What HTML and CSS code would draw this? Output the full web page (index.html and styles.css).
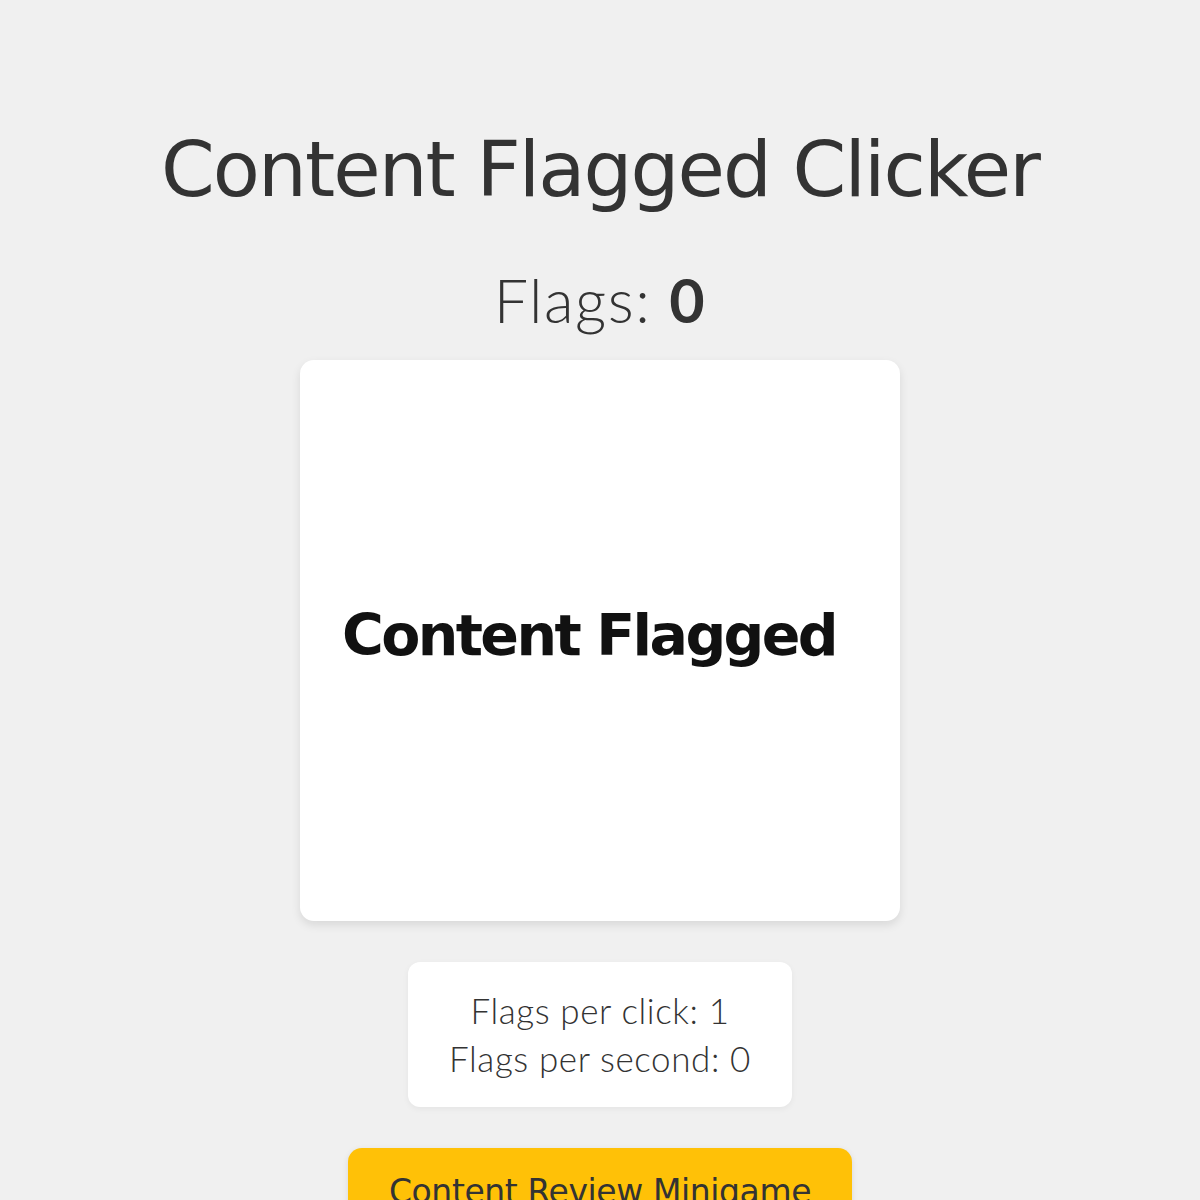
FILE: index.html
```html
<!DOCTYPE html>
<html lang="en">
<head>
    <meta charset="UTF-8">
    <meta name="viewport" content="width=device-width, initial-scale=1.0">
    <title>Content Flagged Clicker</title>
    <link rel="stylesheet" href="styles.css">
</head>
<body>
    <div class="container">
        <h1 class="title">Content Flagged Clicker</h1>
        <div class="score">Flags: <span id="flag-count" class="count">0</span></div>
        <div class="flag-card" id="flag-button">
            <span class="flag-label">Content Flagged</span>
        </div>
        <div class="stats">
            <div>Flags per click: <span id="per-click">1</span></div>
            <div>Flags per second: <span id="per-second">0</span></div>
        </div>
        <button class="minigame-btn">Content Review Minigame</button>
    </div>
</body>
</html>
```

FILE: styles.css
```css
body, html {
    margin: 0;
    padding: 0;
    background-color: #f0f0f0;
    color: #333;
    font-family: "Lato", "Open Sans", sans-serif;
}
.container {
    display: flex;
    flex-direction: column;
    align-items: center;
    text-align: center;
    padding-top: 115px;
}
.title {
    font-family: "DejaVu Sans", sans-serif;
    font-weight: normal;
    font-size: 77px;
    letter-spacing: -1.9px;
    line-height: 110px;
    margin: 0;
}
.score {
    font-weight: 300;
    font-size: 61px;
    letter-spacing: 1.5px;
    line-height: 80px;
    margin-top: 35px;
}
.count {
    font-weight: bold;
}
.flag-card {
    width: 600px;
    height: 561px;
    margin-top: 20px;
    background-color: white;
    border-radius: 14px;
    box-shadow: 0 4px 10px rgba(0,0,0,0.1);
    display: flex;
    justify-content: center;
    align-items: center;
    cursor: pointer;
}
.flag-label {
    font-family: "DejaVu Sans", sans-serif;
    font-weight: bold;
    font-size: 57px;
    letter-spacing: -2.6px;
    color: #111;
    padding-right: 22px;
    padding-bottom: 12px;
}
.stats {
    margin-top: 41px;
    width: 384px;
    box-sizing: border-box;
    padding: 24px 0 25px;
    background-color: white;
    border-radius: 12px;
    box-shadow: 0 2px 6px rgba(0,0,0,0.05);
    font-weight: 300;
    font-size: 35px;
    letter-spacing: 0.6px;
    line-height: 48px;
}
.minigame-btn {
    margin-top: 41px;
    width: 504px;
    padding: 24px 0 20px;
    background-color: #FFC107;
    color: #333;
    border: none;
    border-radius: 14px;
    font-family: "DejaVu Sans", sans-serif;
    font-size: 33px;
    letter-spacing: -0.4px;
    box-shadow: 0 2px 6px rgba(0,0,0,0.1);
    cursor: pointer;
}
```
